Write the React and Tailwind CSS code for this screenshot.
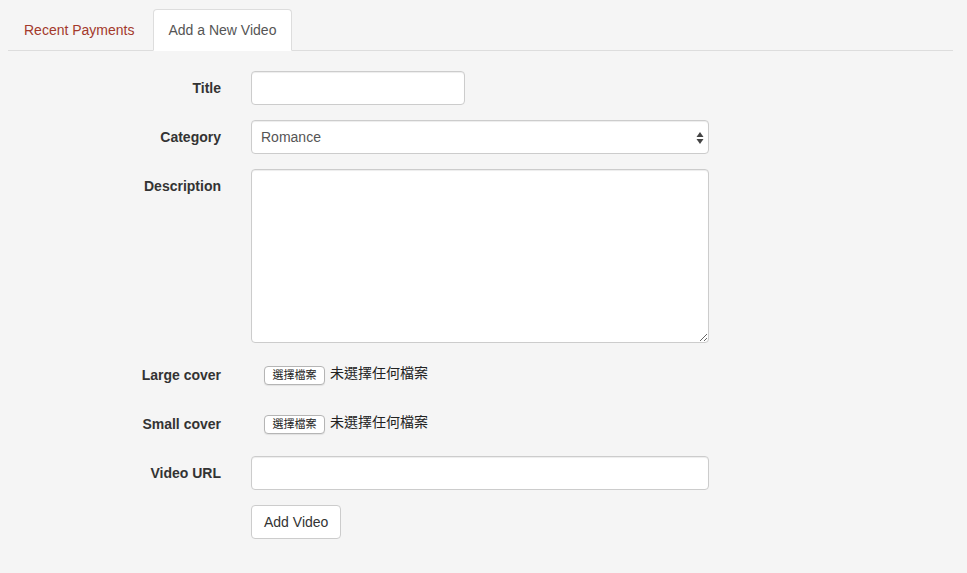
import React from "react";

const font = { fontFamily: '"Liberation Sans", Arial, "Noto Sans CJK TC", sans-serif' };

function Label({ children }) {
  return (
    <label className="w-[213px] shrink-0 text-right pt-[7px] leading-5 text-[14px] font-bold text-[#333]">
      {children}
    </label>
  );
}

function FileRow({ label }) {
  return (
    <div className="flex h-[34px] mb-[15px]">
      <Label>{label}</Label>
      <div className="ml-[43px] pt-[8px] flex items-start">
        <button className="h-[19px] w-[61px] bg-white border border-[#b5b5b5] rounded-[4px] text-[11px] leading-[17px] text-[#222] shadow-[0_1px_1px_rgba(0,0,0,0.08)]">
          選擇檔案
        </button>
        <span className="ml-[5px] -mt-[3px] text-[14px] leading-5 text-[#222]">未選擇任何檔案</span>
      </div>
    </div>
  );
}

export default function App() {
  const inputCls =
    "h-[34px] bg-white border border-[#ccc] rounded-[4px] shadow-[inset_0_1px_1px_rgba(0,0,0,0.075)] px-3 text-[14px] text-[#555] outline-none";
  return (
    <div className="min-h-[573px] bg-[#f5f5f5] pl-[8px] pr-[14px] pt-[9px]" style={font}>
      <ul className="flex border-b border-[#ddd]">
        <li className="-mb-px mr-[2px]">
          <a className="block px-[15px] py-[10px] leading-5 text-[14px] text-[#a3392b] border border-transparent rounded-t-[4px]">
            Recent Payments
          </a>
        </li>
        <li className="-mb-px">
          <a className="block px-[15px] py-[10px] leading-5 text-[14px] text-[#555] bg-white border border-[#ddd] border-b-white rounded-t-[4px]">
            Add a New Video
          </a>
        </li>
      </ul>

      <form className="pt-[20px]" onSubmit={(e) => e.preventDefault()}>
        <div className="flex mb-[15px]">
          <Label>Title</Label>
          <input className={`${inputCls} ml-[30px] w-[214px]`} />
        </div>

        <div className="flex mb-[15px]">
          <Label>Category</Label>
          <div className={`${inputCls} ml-[30px] w-[458px] relative flex items-center px-[9px] text-[#333]`}>
            <span>Romance</span>
            <svg className="absolute right-[3px] top-[10px]" width="10" height="14" viewBox="0 0 10 14">
              <path d="M5 1 L8.5 6 L1.5 6 Z" fill="#444" />
              <path d="M5 13 L8.5 8 L1.5 8 Z" fill="#444" />
            </svg>
          </div>
        </div>

        <div className="flex mb-[15px]">
          <Label>Description</Label>
          <textarea
            className={`${inputCls} ml-[30px] w-[458px] !h-[174px] py-[6px]`}
          />
        </div>

        <FileRow label="Large cover" />
        <FileRow label="Small cover" />

        <div className="flex mb-[15px]">
          <Label>Video URL</Label>
          <input className={`${inputCls} ml-[30px] w-[458px]`} />
        </div>

        <div className="flex">
          <div className="w-[213px] shrink-0" />
          <button className="ml-[30px] h-[34px] px-[12px] bg-white border border-[#ccc] rounded-[4px] text-[14px] text-[#333]">
            Add Video
          </button>
        </div>
      </form>
    </div>
  );
}
